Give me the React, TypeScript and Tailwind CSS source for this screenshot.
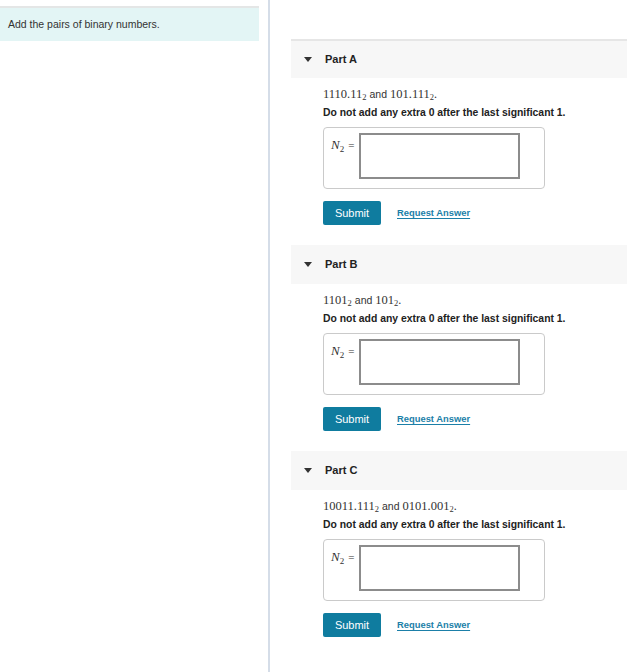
import React from "react";

const sans = { fontFamily: '"Liberation Sans", Arial, sans-serif' };

function Caret() {
  return (
    <svg width="8" height="5" viewBox="0 0 8 5" className="block">
      <path d="M0 0 L8 0 L4 5 Z" fill="#333" />
    </svg>
  );
}

function Num({ v }: { v: string }) {
  return (
    <span className="font-['Liberation_Serif',serif] text-[12.5px]">
      {v}
      <span className="relative top-[2px] text-[8.5px]">2</span>
    </span>
  );
}

function Part({ label, a, b, first }: { label: string; a: string; b: string; first?: boolean }) {
  return (
    <div className="mb-[20px]">
      <div
        className={`h-[39px] bg-[#f7f7f7] flex items-center pl-[13px] ${
          first ? "border-t-2 border-[#e6e6e6]" : ""
        }`}
      >
        <Caret />
        <span className="ml-[13px] font-bold text-[11px] text-[#222]">{label}</span>
      </div>
      <div className="pl-[32px]">
        <div className="pt-[7px] h-[23px] leading-[16px] text-[#333]">
          <Num v={a} />
          <span className="text-[10.5px] mx-[3px]">and</span>
          <Num v={b} />
          <span className="font-['Liberation_Serif',serif] text-[12px]">.</span>
        </div>
        <div className="mt-[4px] h-[16px] flex items-center font-bold text-[10.4px] text-[#222]">
          Do not add any extra 0 after the last significant 1.
        </div>
        <div className="mt-[6px] w-[222px] h-[62px] border-[1.5px] border-[#cacaca] rounded-[4px] flex items-start pt-[5px] pl-[7px]">
          <div className="mt-[4px] w-[28px] shrink-0 leading-[16px] text-[#333] font-['Liberation_Serif',serif] text-[13px] whitespace-nowrap">
            <span className="italic">N</span>
            <span className="relative top-[3px] text-[9px]">2</span>
            <span className="ml-[4px] text-[11px]">=</span>
          </div>
          <div className="w-[161px] h-[46px] border-2 border-[#8c8c8c] bg-white" />
        </div>
        <div className="mt-[12px] flex items-center">
          <button className="w-[58px] h-[24px] bg-[#0f7c9f] text-white text-[11px] rounded-[2px] flex items-center justify-center">
            Submit
          </button>
          <a className="ml-[16px] text-[9.4px] font-bold text-[#1b7fa8] underline underline-offset-[2px]">
            Request Answer
          </a>
        </div>
      </div>
    </div>
  );
}

export default function App() {
  return (
    <div className="flex min-h-[672px] w-[627px] bg-white overflow-hidden" style={sans}>
      <div className="w-[268px] shrink-0 pt-[6px]">
        <div className="w-[259px] h-[35px] border-t-2 border-[#e4e6e6] bg-[#e3f5f5] flex items-center pl-[8px] text-[10.5px] text-[#333]">
          Add the pairs of binary numbers.
        </div>
      </div>
      <div className="flex-1 border-l-2 border-[#d5dde8] pl-[21px] pt-[39px]">
        <Part label="Part A" a="1110.11" b="101.111" first />
        <Part label="Part B" a="1101" b="101" />
        <Part label="Part C" a="10011.111" b="0101.001" />
      </div>
    </div>
  );
}
